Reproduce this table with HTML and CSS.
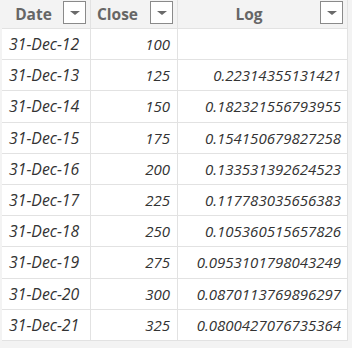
FILE: index.html
```html
<!DOCTYPE html>
<html>
<head>
<meta charset="utf-8">
<link rel="stylesheet" href="styles.css">
</head>
<body>
<div class="grid">
  <div class="hd c-date"><span class="lbl">Date</span><span class="dd"><span class="tri"></span></span></div>
  <div class="hd c-close"><span class="lbl">Close</span><span class="dd"><span class="tri"></span></span></div>
  <div class="hd c-log"><span class="lbl">Log</span><span class="dd"><span class="tri"></span></span></div>

  <div class="cell date">31-Dec-12</div><div class="cell num">100</div><div class="cell num log"></div>
  <div class="cell date">31-Dec-13</div><div class="cell num">125</div><div class="cell num log">0.22314355131421</div>
  <div class="cell date">31-Dec-14</div><div class="cell num">150</div><div class="cell num log">0.182321556793955</div>
  <div class="cell date">31-Dec-15</div><div class="cell num">175</div><div class="cell num log">0.154150679827258</div>
  <div class="cell date">31-Dec-16</div><div class="cell num">200</div><div class="cell num log">0.133531392624523</div>
  <div class="cell date">31-Dec-17</div><div class="cell num">225</div><div class="cell num log">0.117783035656383</div>
  <div class="cell date">31-Dec-18</div><div class="cell num">250</div><div class="cell num log">0.105360515657826</div>
  <div class="cell date">31-Dec-19</div><div class="cell num">275</div><div class="cell num log">0.0953101798043249</div>
  <div class="cell date">31-Dec-20</div><div class="cell num">300</div><div class="cell num log">0.0870113769896297</div>
  <div class="cell date">31-Dec-21</div><div class="cell num">325</div><div class="cell num log">0.0800427076735364</div>
</div>
</body>
</html>
```
FILE: styles.css
```css
html, body {
  margin: 0;
  padding: 0;
  background: #f3f3f3;
}
body {
  font-family: "Open Sans", "Noto Sans", sans-serif;
  width: 352px;
  height: 348px;
  overflow: hidden;
}
.grid {
  display: grid;
  grid-template-columns: 89px 87px 170px;
  grid-template-rows: 29px repeat(10, 31.2px);
  margin-left: 2px;
  width: 346px;
  background: #fff;
}
.hd {
  background: #f3f3f3;
  border-right: 1px solid #e2e2e2;
  border-bottom: 1px solid #e2e2e2;
  display: flex;
  align-items: flex-start;
  box-sizing: border-box;
  padding-right: 4px;
}
.hd .lbl {
  flex: 1;
  text-align: center;
  font-weight: 700;
  font-size: 15.5px;
  color: #666;
  line-height: 26px;
  padding-top: 1px;
}
.c-date .lbl { padding-left: 2px; }
.c-close .lbl { padding-right: 6px; }
.dd {
  width: 23px;
  height: 23px;
  margin-top: 1px;
  box-sizing: border-box;
  border: 1px solid #8a8a8a;
  background: #fff;
  display: flex;
  align-items: center;
  justify-content: center;
}
.tri {
  width: 0;
  height: 0;
  border-left: 5px solid transparent;
  border-right: 5px solid transparent;
  border-top: 4px solid #6a6a6a;
}
.cell {
  border-right: 1px solid #e2e2e2;
  border-bottom: 1px solid #e2e2e2;
  box-sizing: border-box;
  font-style: italic;
  font-size: 15px;
  color: #333;
  display: flex;
  align-items: center;
  white-space: nowrap;
  overflow: hidden;
}
.date {
  padding-left: 7px;
  font-size: 15.8px;
}
.num {
  justify-content: flex-end;
  padding-right: 7px;
}
.log {
  padding-right: 6px;
}
```
